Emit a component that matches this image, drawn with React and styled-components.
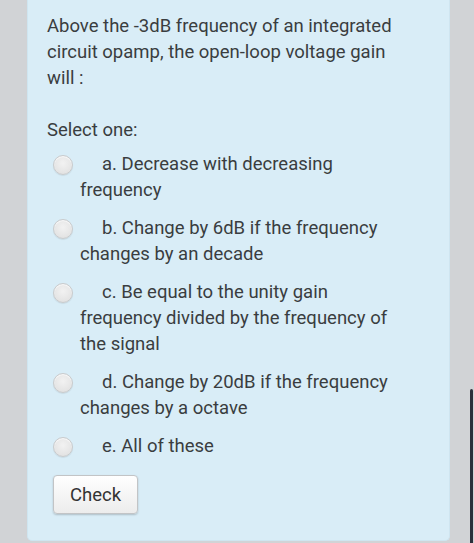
import React from 'react';
import styled, { createGlobalStyle } from 'styled-components';

const GlobalStyle = createGlobalStyle`
  html, body {
    margin: 0;
    padding: 0;
    background: #d1d3d6;
  }
  body {
    font-family: Roboto, "Noto Sans", Arial, sans-serif;
    color: #3a3d40;
  }
`

const Page = styled.div`
  position: relative;
  width: 474px;
  height: 543px;
  overflow: hidden;
  padding-left: 27px;
  box-sizing: border-box;
`

const Card = styled.div`
  width: 423px;
  box-sizing: border-box;
  background: #d9edf7;
  border: 1px solid #cfe5f0;
  border-top: none;
  border-radius: 0 0 5px 5px;
  padding: 13px 45px 26px 19px;
  font-size: 18.5px;
  line-height: 26px;
`

const Question = styled.div`
  margin: 0 0 26px;
`

const Prompt = styled.div`
  margin-bottom: 8px;
`

const Answers = styled.div`
  display: flex;
  flex-direction: column;
  gap: 12px;
`

const Option = styled.label`
  display: block;
  padding-left: 33px;
`

const Radio = styled.span`
  display: inline-block;
  width: 18px;
  height: 18px;
  margin-left: -27px;
  margin-right: 29px;
  vertical-align: -5px;
  border-radius: 50%;
  border: 1px solid #c9cbcd;
  background: radial-gradient(circle at 50% 40%, #f2f2f2 0%, #e4e4e4 70%, #d8d8d8 100%);
  box-shadow: inset 0 1px 1px rgba(255, 255, 255, .8), 0 1px 1px rgba(0, 0, 0, .08);
`

const CheckButton = styled.button`
  margin-top: 16px;
  margin-left: 6px;
  width: 85px;
  height: 39px;
  padding: 0;
  font-family: inherit;
  font-size: 18.5px;
  color: #333;
  background: linear-gradient(#ffffff, #ececec);
  border: 1px solid #c2c4c6;
  border-radius: 4px;
  box-shadow: 0 1px 2px rgba(0, 0, 0, .2);
`

const ScrollThumb = styled.div`
  position: absolute;
  right: 1px;
  top: 389px;
  width: 3px;
  height: 160px;
  background: #2b2f3a;
  border-radius: 2px;
`

const answers = [
  'a. Decrease with decreasing frequency',
  'b. Change by 6dB if the frequency changes by an decade',
  'c. Be equal to the unity gain frequency divided by the frequency of the signal',
  'd. Change by 20dB if the frequency changes by a octave',
  'e. All of these',
];

export default function App() {
  return (
    <Page>
      <GlobalStyle />
      <Card>
        <Question>
          Above the -3dB frequency of an integrated circuit opamp, the open-loop voltage gain will :
        </Question>
        <Prompt>Select one:</Prompt>
        <Answers>
          {answers.map(a => (
            <Option key={a}>
              <Radio />
              {a}
            </Option>
          ))}
        </Answers>
        <CheckButton>Check</CheckButton>
      </Card>
      <ScrollThumb />
    </Page>
  );
}
